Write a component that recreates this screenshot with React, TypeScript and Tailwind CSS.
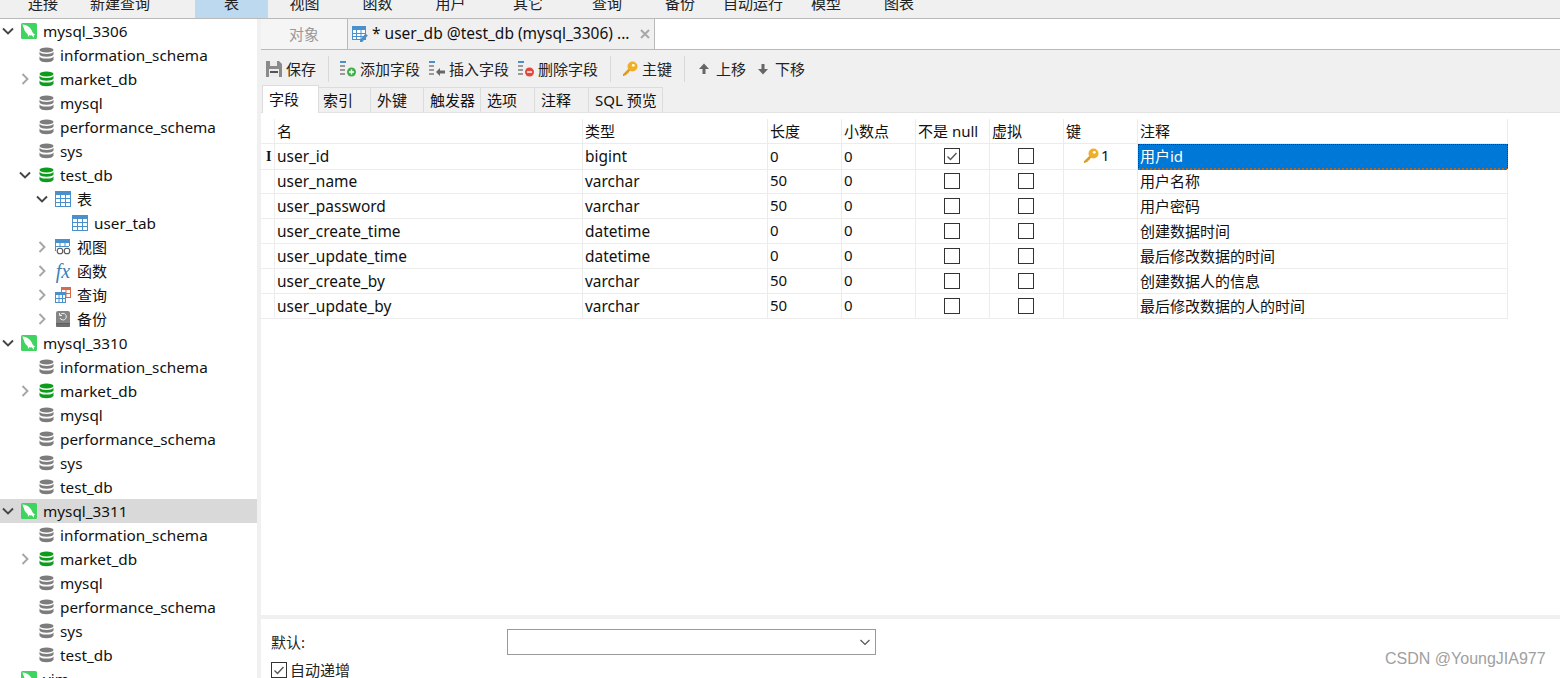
import React from "react";

const FONT = "font-['Noto_Sans','Noto_Sans_CJK_SC',sans-serif]";

function Chevron({ open }: { open?: boolean }) {
  return open ? (
    <svg className="-ml-[2px]" width="12" height="12" viewBox="0 0 12 12" fill="none" stroke="#444" strokeWidth="1.9">
      <path d="M1 3.500l5 5 5-5" />
    </svg>
  ) : (
    <svg className="-ml-[2px]" width="12" height="12" viewBox="0 0 12 12" fill="none" stroke="#a6a6a6" strokeWidth="1.9">
      <path d="M3.500 1l5 5-5 5" />
    </svg>
  );
}

function Dolphin() {
  return (
    <svg width="16" height="16" viewBox="0 0 16 16">
      <rect x="0" y="0" width="16" height="16" rx="1.500" fill="#3fd35f" />
      <path
        d="M1.500 1.500C4 1.700 6.300 2.500 8 4c1.500 1.300 2.500 2.800 3.200 4.500.4 1 1 1.900 2 2.500l1.300.8-1.700.2c.3 1 .3 1.800.1 2.800-.7-1-1.300-1.800-2.300-2.500-.8.2-1.600 0-2.400-.4-.2.8-.2 1.300 0 2-1-.5-1.500-1.500-1.600-2.800C4.500 9.500 3.300 7.500 3 5.500 2.300 4.500 1.800 3 1.500 1.500z"
        fill="#fff"
      />
    </svg>
  );
}

function Db({ green }: { green?: boolean }) {
  const c = green ? "#0d9c1c" : "#7c7c7c";
  return (
    <svg width="15" height="16" viewBox="0 0 15 16">
      <ellipse cx="7.500" cy="3" rx="7" ry="2.600" fill={c} />
      <path d="M.5 4.800c1 1.500 3.500 2.200 7 2.200s6-.7 7-2.200V7.600c-.8 1.500-3.500 2.200-7 2.200s-6.200-.7-7-2.200z" fill={c} />
      <path d="M.5 9.400c1 1.500 3.500 2.200 7 2.200s6-.7 7-2.200v3.300c-.8 1.700-3.500 2.500-7 2.500s-6.200-.8-7-2.500z" fill={c} />
    </svg>
  );
}

function TableIcon() {
  return (
    <svg width="16" height="16" viewBox="0 0 16 16">
      <rect x="0.500" y="0.500" width="15" height="15" fill="#fff" stroke="#4a90cc" />
      <rect x="0" y="0" width="16" height="4" fill="#4a90cc" />
      <path d="M5.500 4v11M10.500 4v11M1 7.500h14M1 11.500h14" stroke="#4a90cc" strokeWidth="1" />
    </svg>
  );
}

function ViewIcon() {
  return (
    <svg width="16" height="16" viewBox="0 0 16 16">
      <rect x="0" y="0" width="15" height="4" fill="#4a90cc" />
      <path d="M.5 4v8M5 4v4M10 4v4M14.500 4v3M1 7.500h13" stroke="#4a90cc" strokeWidth="1" fill="none" />
      <circle cx="5" cy="12" r="2.800" fill="#fff" stroke="#555" strokeWidth="1.100" />
      <circle cx="12" cy="12" r="2.800" fill="#fff" stroke="#555" strokeWidth="1.100" />
    </svg>
  );
}

function QueryIcon() {
  return (
    <svg width="16" height="16" viewBox="0 0 16 16">
      <rect x="6.500" y="0.500" width="9" height="10" fill="#fff" stroke="#d9694a" />
      <rect x="6" y="0" width="10" height="3" fill="#d9694a" />
      <path d="M11 3v7M7 6.500h8" stroke="#d9694a" />
      <rect x="0.500" y="5.500" width="10" height="10" fill="#fff" stroke="#4a90cc" />
      <rect x="0" y="5" width="11" height="3" fill="#4a90cc" />
      <path d="M4 8v7M7.500 8v7M1 11.500h9" stroke="#4a90cc" />
    </svg>
  );
}

function BackupIcon() {
  return (
    <svg width="14" height="16" viewBox="0 0 14 16">
      <rect x="0" y="0" width="14" height="16" rx="2" fill="#858585" />
      <rect x="0" y="12" width="14" height="1" fill="#606060" />
      <rect x="0" y="13" width="14" height="3" rx="1" fill="#6e6e6e" />
      <path d="M4.500 3.500A3.300 3.300 0 1 1 4 7" fill="none" stroke="#eee" strokeWidth="1" />
      <path d="M3.500 2v2.500H6" fill="none" stroke="#eee" strokeWidth="1" />
    </svg>
  );
}

function Fx() {
  return <span className="font-['Liberation_Serif',serif] italic text-[20px] leading-[16px] text-[#3f7fb5]">fx</span>;
}

function KeyIcon({ size = 16 }: { size?: number }) {
  return (
    <svg width={size} height={size} viewBox="0 0 16 16">
      <path d="M1 13.200L7 7.200l1.800 1.800-2 2-.6 1.400-1.400.1-.3 1.500-1.700.3-.8.7H1z" fill="#dd9a1f" />
      <circle cx="10.500" cy="5.500" r="5" fill="#eeb02c" />
      <circle cx="11.300" cy="4.300" r="1.400" fill="#fff" />
    </svg>
  );
}

type TreeItem = { level: 0 | 1 | 2 | 3; label: string; icon: React.ReactNode; chev?: "open" | "closed"; selected?: boolean; cjk?: boolean };

const indent = ["pl-[4px]", "pl-[21px]", "pl-[38px]", "pl-[55px]"];

function dbRows(): TreeItem[] {
  return [
    { level: 1, label: "information_schema", icon: <Db /> },
    { level: 1, label: "market_db", icon: <Db green />, chev: "closed" },
    { level: 1, label: "mysql", icon: <Db /> },
    { level: 1, label: "performance_schema", icon: <Db /> },
    { level: 1, label: "sys", icon: <Db /> },
  ];
}

const tree: TreeItem[] = [
  { level: 0, label: "mysql_3306", icon: <Dolphin />, chev: "open" },
  ...dbRows(),
  { level: 1, label: "test_db", icon: <Db green />, chev: "open" },
  { level: 2, label: "表", icon: <TableIcon />, chev: "open", cjk: true },
  { level: 3, label: "user_tab", icon: <TableIcon /> },
  { level: 2, label: "视图", icon: <ViewIcon />, chev: "closed", cjk: true },
  { level: 2, label: "函数", icon: <Fx />, chev: "closed", cjk: true },
  { level: 2, label: "查询", icon: <QueryIcon />, chev: "closed", cjk: true },
  { level: 2, label: "备份", icon: <BackupIcon />, chev: "closed", cjk: true },
  { level: 0, label: "mysql_3310", icon: <Dolphin />, chev: "open" },
  ...dbRows(),
  { level: 1, label: "test_db", icon: <Db /> },
  { level: 0, label: "mysql_3311", icon: <Dolphin />, chev: "open", selected: true },
  ...dbRows(),
  { level: 1, label: "test_db", icon: <Db /> },
  { level: 0, label: "vim", icon: <Dolphin /> },
];

function TreeRow({ item }: { item: TreeItem }) {
  return (
    <div className={`flex h-[24px] shrink-0 items-center ${indent[item.level]} ${item.selected ? "bg-[#d9d9d9]" : ""}`}>
      <span className="flex w-[17px] shrink-0 items-center justify-start">
        {item.chev && <Chevron open={item.chev === "open"} />}
      </span>
      <span className="flex w-[16px] shrink-0 items-center justify-center">{item.icon}</span>
      <span className={`ml-[6px] whitespace-nowrap leading-[20px] text-[#111] ${item.cjk ? "text-[15px]" : "text-[15.3px]"}`}>{item.label}</span>
    </div>
  );
}

const menu = [
  { t: "连接", c: "w-[72px] ml-[7px]" },
  { t: "新建查询", c: "w-[82px]" },
  { t: "表", c: "w-[73px] ml-[34px] bg-[#bcd9f0]" },
  { t: "视图", c: "w-[73px]" },
  { t: "函数", c: "w-[73px]" },
  { t: "用户", c: "w-[73px]" },
  { t: "其它", c: "w-[82px]" },
  { t: "查询", c: "w-[76px]" },
  { t: "备份", c: "w-[70px]" },
  { t: "自动运行", c: "w-[76px]" },
  { t: "模型", c: "w-[70px]" },
  { t: "图表", c: "w-[76px]" },
];

function FieldIcon({ kind }: { kind: "add" | "insert" | "delete" }) {
  return (
    <svg width="16" height="16" viewBox="0 0 16 16">
      <rect x="0" y="0" width="6" height="2" fill="#4a90cc" />
      <rect x="0" y="4" width="5" height="2" fill="#9a9a9a" />
      <rect x="0" y="8" width="5" height="2" fill="#9a9a9a" />
      <rect x="0" y="12" width="5" height="2" fill="#9a9a9a" />
      {kind === "add" && (
        <>
          <circle cx="11.500" cy="11" r="4.500" fill="#3fae49" />
          <path d="M9 11h5M11.500 8.500v5" stroke="#fff" strokeWidth="1.500" />
        </>
      )}
      {kind === "delete" && (
        <>
          <circle cx="11.500" cy="11" r="4.500" fill="#e2483d" />
          <path d="M9 11h5" stroke="#fff" strokeWidth="1.500" />
        </>
      )}
      {kind === "insert" && <path d="M7 11l4-4v2.500h5v3h-5V15z" fill="#666" />}
    </svg>
  );
}

function SaveIcon() {
  return (
    <svg width="16" height="16" viewBox="0 0 16 16">
      <path d="M0 0h13l3 3v13H0z" fill="#8a8a8a" />
      <rect x="4" y="0" width="7" height="5" fill="#ececec" />
      <rect x="3" y="8" width="10" height="8" fill="#ececec" />
      <rect x="4" y="10" width="8" height="2" fill="#555" />
    </svg>
  );
}

function Arrow({ down }: { down?: boolean }) {
  return (
    <svg width="12" height="12" viewBox="0 0 12 12" fill="#666">
      {down ? <path d="M4.500 1h3v5H11L6 11.500 1 6h3.500z" /> : <path d="M4.500 11h3V6H11L6 .5 1 6h3.500z" />}
    </svg>
  );
}

function Sep({ c }: { c: string }) {
  return <span className={`h-[26px] w-px bg-[#d9d9d9] ${c}`} />;
}

function Tool({ icon, label, c = "", gap = "gap-[4px]" }: { icon: React.ReactNode; label: string; c?: string; gap?: string }) {
  return (
    <span className={`flex items-center ${gap} ${c}`}>
      {icon}
      <span className="whitespace-nowrap text-[15px] leading-[20px] text-[#222]">{label}</span>
    </span>
  );
}

const subTabs = [
  { t: "索引", c: "w-[52px] pl-[4px]" },
  { t: "外键", c: "w-[53px] pl-[6px]" },
  { t: "触发器", c: "w-[57px] pl-[6px]" },
  { t: "选项", c: "w-[54px] pl-[6px]" },
  { t: "注释", c: "w-[54px] pl-[6px]" },
  { t: "SQL 预览", c: "w-[74px] pl-[6px]" },
];

function Box({ checked, c = "" }: { checked?: boolean; c?: string }) {
  return (
    <span className={`flex h-[16px] w-[16px] items-center justify-center border-[1.5px] border-[#333] bg-white ${c}`}>
      {checked && (
        <svg width="12" height="12" viewBox="0 0 12 12" fill="none" stroke="#555" strokeWidth="1.400">
          <path d="M1.500 6.500L4.500 9.500 10.500 3" />
        </svg>
      )}
    </span>
  );
}

const columns = "grid h-[25px] grid-cols-[14px_308px_185px_74px_74px_74px_74px_74px_370px] w-[1247px]";
const cellBase = "flex items-center border-r border-b border-[#ececec] text-[#111] whitespace-nowrap overflow-hidden";
const cell = `${cellBase} pl-[2px] text-[15px]`;
const latin = `${cellBase} pl-[2px] pt-px text-[15.45px]`;
const digit = `${cellBase} pl-[2px] pb-px text-[15px]`;
const boxCell = `${cellBase} justify-center pr-px`;

const fields = [
  ["user_id", "bigint", "0", "用户id"],
  ["user_name", "varchar", "50", "用户名称"],
  ["user_password", "varchar", "50", "用户密码"],
  ["user_create_time", "datetime", "0", "创建数据时间"],
  ["user_update_time", "datetime", "0", "最后修改数据的时间"],
  ["user_create_by", "varchar", "50", "创建数据人的信息"],
  ["user_update_by", "varchar", "50", "最后修改数据的人的时间"],
];

export default function App() {
  return (
    <div className={`relative flex h-[678px] w-[1560px] flex-col overflow-hidden bg-white ${FONT}`}>
      {/* top ribbon, cropped by the window */}
      <div className="flex h-[19px] shrink-0 items-stretch overflow-hidden border-b border-[#b9b9b9] bg-[#f0f0f0]">
        {menu.map((m) => (
          <div key={m.t + m.c} className={`flex h-[18px] justify-center text-[15px] leading-[6px] text-[#222] ${m.c}`}>
            {m.t}
          </div>
        ))}
      </div>

      <div className="flex min-h-0 flex-1">
        {/* connection tree */}
        <div className="flex w-[257px] shrink-0 flex-col overflow-hidden">
          {tree.map((t, i) => (
            <TreeRow key={i} item={t} />
          ))}
        </div>
        <div className="w-[4px] shrink-0 bg-[#f0f0f0]" />

        {/* main */}
        <div className="flex min-w-0 flex-1 flex-col">
          {/* doc tabs */}
          <div className="flex h-[31px] shrink-0 border-b border-[#b9b9b9]">
            <div className="flex w-[87px] items-center justify-center border-r border-[#b9b9b9] bg-[#f5f5f5] text-[15px] text-[#999]">
              对象
            </div>
            <div className="flex w-[306px] items-center bg-[#f0f0f0] pl-[4px]">
              <svg width="16" height="16" viewBox="0 0 16 16">
                <rect x="0.500" y="0.500" width="13" height="13" fill="#fff" stroke="#4a90cc" />
                <rect x="0" y="0" width="14" height="4" fill="#4a90cc" />
                <path d="M4.500 4v9M9 4v9M1 7.500h12M1 10.500h12" stroke="#4a90cc" />
                <path d="M8 14l5.500-6.500 2.300 2L10.300 16H8z" fill="#4f8fc7" />
              </svg>
              <span className="ml-[4px] w-[260px] whitespace-nowrap text-[15.5px] text-[#111]">* user_db @test_db (mysql_3306) ...</span>
              <svg className="ml-[8px]" width="10" height="10" viewBox="0 0 10 10" stroke="#a8a8a8" strokeWidth="2">
                <path d="M1 1l8 8M9 1l-8 8" />
              </svg>
            </div>
            <div className="flex-1 border-l border-[#b9b9b9] bg-white" />
          </div>

          {/* toolbar */}
          <div className="flex h-[35px] shrink-0 items-center bg-[#f0f0f0] pl-[5px] pt-[3px]">
            <Tool icon={<SaveIcon />} label="保存" />
            <Sep c="ml-[12px]" />
            <Tool icon={<FieldIcon kind="add" />} label="添加字段" c="ml-[11px]" />
            <Tool icon={<FieldIcon kind="insert" />} label="插入字段" c="ml-[9px]" />
            <Tool icon={<FieldIcon kind="delete" />} label="删除字段" c="ml-[9px]" />
            <Sep c="ml-[12px]" />
            <Tool icon={<KeyIcon />} label="主键" c="ml-[11px]" />
            <Sep c="ml-[12px]" />
            <Tool icon={<Arrow />} label="上移" c="ml-[13px]" gap="gap-[6px]" />
            <Tool icon={<Arrow down />} label="下移" c="ml-[11px]" gap="gap-[6px]" />
          </div>

          {/* sub tabs */}
          <div className="flex h-[28px] shrink-0 items-end border-b border-[#e3e3e3] bg-[#f0f0f0] pl-px">
            <div className="z-10 -mb-px flex h-[28px] w-[57px] items-center border border-b-0 border-[#dcdcdc] bg-white pl-[6px] text-[15px] text-[#111]">
              字段
            </div>
            {subTabs.map((s) => (
              <div key={s.t} className={`flex h-[25px] items-center border-r border-t border-[#dcdcdc] bg-[#f0f0f0] text-[15px] text-[#111] whitespace-nowrap ${s.c}`}>
                {s.t}
              </div>
            ))}
          </div>

          {/* grid */}
          <div className="min-h-0 flex-1 pt-[6px]">
            <div className={columns}>
              {["", "名", "类型", "长度", "小数点", "不是 null", "虚拟", "键", "注释"].map((h, i) => (
                <div key={i} className={cell}>
                  {h}
                </div>
              ))}
            </div>
            {fields.map((f, r) => (
              <div key={f[0]} className={columns}>
                <div className={`${cellBase} pl-[5px] font-['Liberation_Serif',serif] text-[14px] font-bold`}>{r === 0 ? "I" : ""}</div>
                <div className={latin}>{f[0]}</div>
                <div className={latin}>{f[1]}</div>
                <div className={digit}>{f[2]}</div>
                <div className={digit}>0</div>
                <div className={boxCell}>
                  <Box checked={r === 0} />
                </div>
                <div className={boxCell}>
                  <Box />
                </div>
                <div className={`${cellBase} pl-[19px] text-[15px]`}>
                  {r === 0 && (
                    <>
                      <KeyIcon />
                      <span className="ml-[2px] -mt-[3px]">1</span>
                    </>
                  )}
                </div>
                {r === 0 ? (
                  <div className="flex items-center whitespace-nowrap border border-dotted border-b-2 border-[#1b3a57] border-b-[#b5651d] bg-[#0078d7] pl-px text-[15px] text-white">
                    {f[3]}
                  </div>
                ) : (
                  <div className={cell}>{f[3]}</div>
                )}
              </div>
            ))}
          </div>

          <div className="h-[4px] shrink-0 bg-[#f0f0f0]" />

          {/* field options */}
          <div className="h-[59px] shrink-0 overflow-hidden pl-[10px]">
            <div className="mt-[10px] flex h-[26px] items-center text-[15px] text-[#222]">
              <span className="w-[236px]">默认:</span>
              <div className="flex h-[26px] w-[369px] items-center justify-end border border-[#9a9a9a] pr-[4px]">
                <svg width="12" height="12" viewBox="0 0 12 12" fill="none" stroke="#555" strokeWidth="1.200">
                  <path d="M1.500 4l4.500 4.500L10.500 4" />
                </svg>
              </div>
            </div>
            <div className="mt-[7px] flex items-center text-[15px] text-[#222]">
              <Box checked />
              <span className="ml-[3px] whitespace-nowrap leading-[15px]">自动递增</span>
            </div>
          </div>
        </div>
      </div>

      <div className="absolute left-[1385px] top-[649px] whitespace-nowrap font-['Liberation_Sans',sans-serif] text-[16px] leading-[20px] text-[#a0a0a0]">
        CSDN @YoungJIA977
      </div>
    </div>
  );
}
